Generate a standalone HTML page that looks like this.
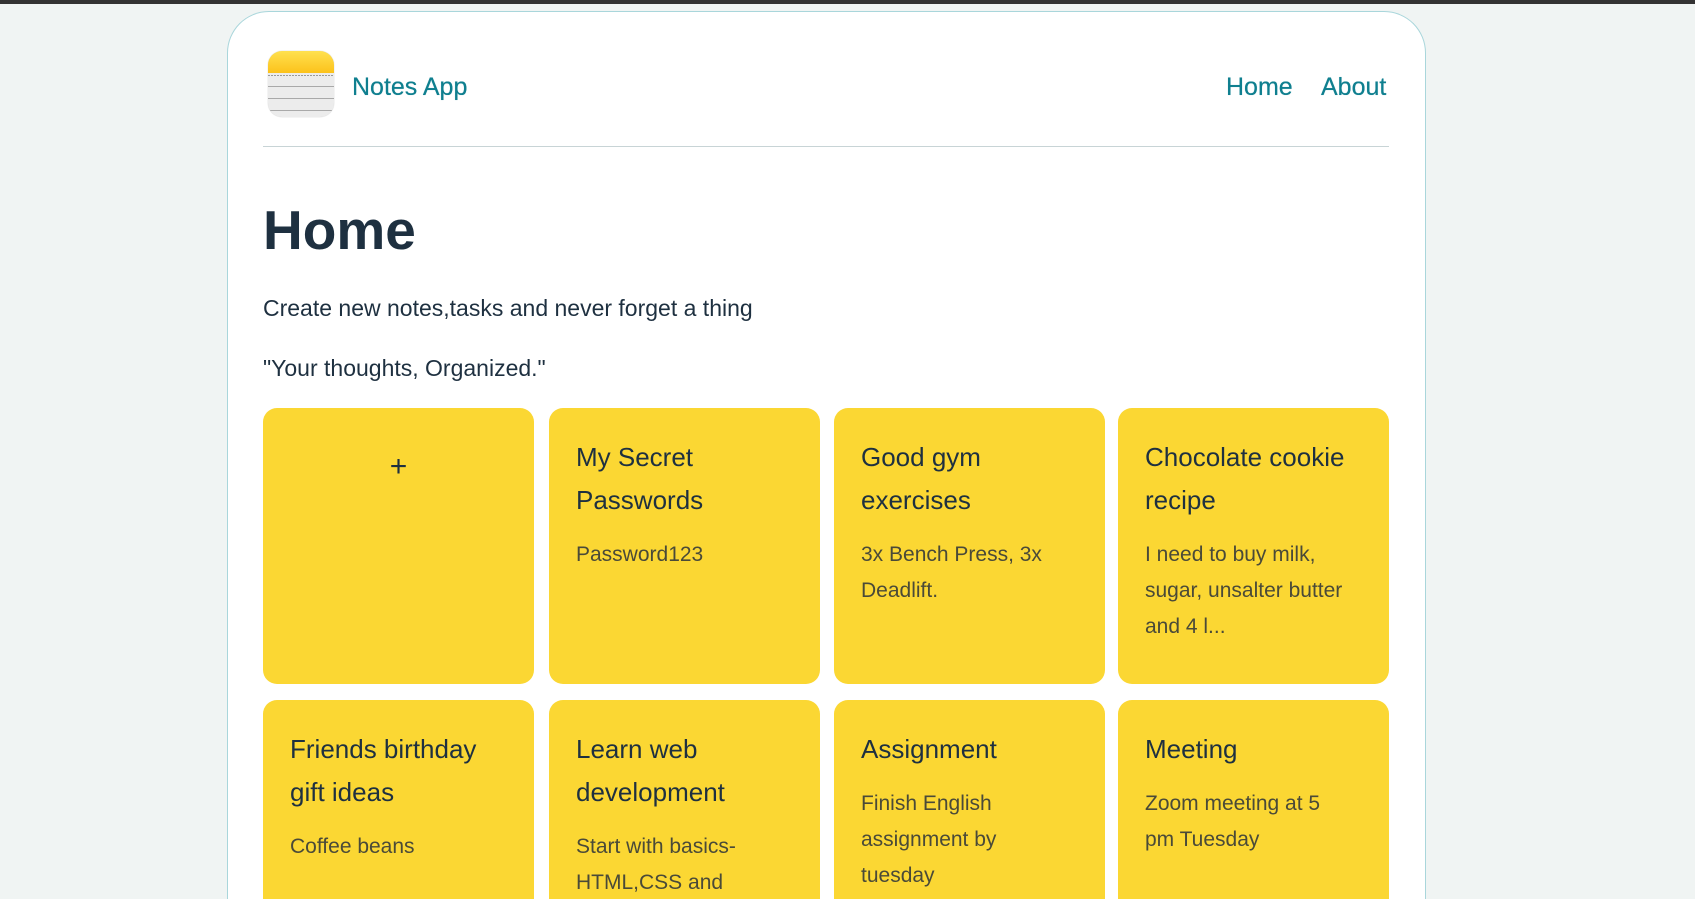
<!DOCTYPE html>
<html style="overflow:hidden;height:899px"><head><meta charset="utf-8"><style>
*{box-sizing:border-box;margin:0;padding:0}
body{width:1695px;height:899px;overflow:hidden;background:#f0f4f3;font-family:"Liberation Sans",sans-serif;color:#1e3040;position:relative}
.top{position:absolute;left:0;top:0;width:1695px;height:4px;background:#333}
.wrap{position:absolute;left:227px;top:11px;width:1199px;height:888px;background:#fff;border:1px solid #a9d6db;border-bottom:0;border-radius:42px 42px 0 0}
.logo{position:absolute;left:268px;top:51px;width:66px;height:66px;border-radius:14px;overflow:hidden;background:#ececec;box-shadow:0 0 1px #bbb}
.logo .y{height:22px;background:linear-gradient(#ffe14f,#fcc21b)}
.logo .l{position:absolute;left:0;right:0;height:1px;background:#a9a9a9}
.brand{position:absolute;left:352px;top:73px;font-size:25px;color:#0f7f8f;text-shadow:0 0 .5px #0f7f8f}
.nav{position:absolute;top:73px;font-size:25px;color:#0f7f8f;text-shadow:0 0 .5px #0f7f8f}
hr{position:absolute;left:263px;top:146px;width:1126px;border:0;border-top:1px solid #c8d4d6}
h1{position:absolute;left:263px;top:198px;font-size:55px;font-weight:bold;color:#1e3040}
.p{position:absolute;left:263px;font-size:23px;color:#1e3040}
.c{position:absolute;width:271px;height:276px;background:#fbd733;border-radius:14px;padding:28px 27px;white-space:nowrap;overflow:hidden}
.r2{height:199px;border-radius:14px 14px 0 0}
.c h3{font-size:26px;font-weight:normal;line-height:43px;color:#1e3040}
.c p{font-size:21px;line-height:36px;color:#4a4a38;margin-top:15px}
.plus{text-align:center;font-size:30px;padding-top:42px}
</style></head><body>
<div class="top"></div>
<div class="wrap"></div>
<div class="logo"><div class="y"></div><div class="l" style="top:24px;background:repeating-linear-gradient(90deg,#999 0 2px,transparent 2px 3px)"></div><div class="l" style="top:35px"></div><div class="l" style="top:47px"></div><div class="l" style="top:59px"></div></div>
<div class="brand">Notes App</div>
<div class="nav" style="left:1226px">Home</div>
<div class="nav" style="left:1321px">About</div>
<hr>
<h1>Home</h1>
<div class="p" style="top:295px">Create new notes,tasks and never forget a thing</div>
<div class="p" style="top:355px">"Your thoughts, Organized."</div>

<div class="c plus" style="left:263px;top:408px">+</div>
<div class="c" style="left:549px;top:408px"><h3>My Secret<br>Passwords</h3><p>Password123</p></div>
<div class="c" style="left:834px;top:408px"><h3>Good gym<br>exercises</h3><p>3x Bench Press, 3x<br>Deadlift.</p></div>
<div class="c" style="left:1118px;top:408px"><h3>Chocolate cookie<br>recipe</h3><p>I need to buy milk,<br>sugar, unsalter butter<br>and 4 l...</p></div>

<div class="c r2" style="left:263px;top:700px"><h3>Friends birthday<br>gift ideas</h3><p>Coffee beans</p></div>
<div class="c r2" style="left:549px;top:700px"><h3>Learn web<br>development</h3><p>Start with basics-<br>HTML,CSS and</p></div>
<div class="c r2" style="left:834px;top:700px"><h3>Assignment</h3><p>Finish English<br>assignment by<br>tuesday</p></div>
<div class="c r2" style="left:1118px;top:700px"><h3>Meeting</h3><p>Zoom meeting at 5<br>pm Tuesday</p></div>
</body></html>
